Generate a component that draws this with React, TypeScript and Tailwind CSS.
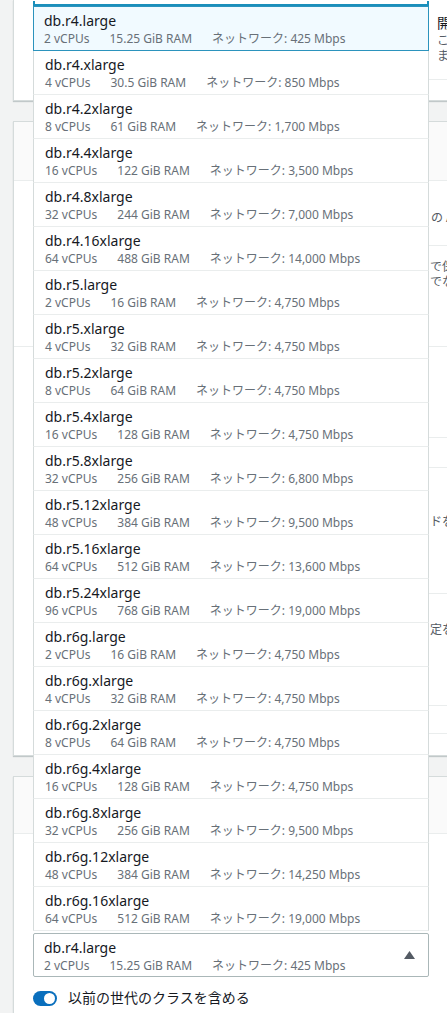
import { Fragment } from "react";

type InstanceClass = {
  name: string;
  cpus: number;
  ram: string;
  network: string;
};

const instanceClasses: InstanceClass[] = [
  { name: "db.r4.large", cpus: 2, ram: "15.25", network: "425" },
  { name: "db.r4.xlarge", cpus: 4, ram: "30.5", network: "850" },
  { name: "db.r4.2xlarge", cpus: 8, ram: "61", network: "1,700" },
  { name: "db.r4.4xlarge", cpus: 16, ram: "122", network: "3,500" },
  { name: "db.r4.8xlarge", cpus: 32, ram: "244", network: "7,000" },
  { name: "db.r4.16xlarge", cpus: 64, ram: "488", network: "14,000" },
  { name: "db.r5.large", cpus: 2, ram: "16", network: "4,750" },
  { name: "db.r5.xlarge", cpus: 4, ram: "32", network: "4,750" },
  { name: "db.r5.2xlarge", cpus: 8, ram: "64", network: "4,750" },
  { name: "db.r5.4xlarge", cpus: 16, ram: "128", network: "4,750" },
  { name: "db.r5.8xlarge", cpus: 32, ram: "256", network: "6,800" },
  { name: "db.r5.12xlarge", cpus: 48, ram: "384", network: "9,500" },
  { name: "db.r5.16xlarge", cpus: 64, ram: "512", network: "13,600" },
  { name: "db.r5.24xlarge", cpus: 96, ram: "768", network: "19,000" },
  { name: "db.r6g.large", cpus: 2, ram: "16", network: "4,750" },
  { name: "db.r6g.xlarge", cpus: 4, ram: "32", network: "4,750" },
  { name: "db.r6g.2xlarge", cpus: 8, ram: "64", network: "4,750" },
  { name: "db.r6g.4xlarge", cpus: 16, ram: "128", network: "4,750" },
  { name: "db.r6g.8xlarge", cpus: 32, ram: "256", network: "9,500" },
  { name: "db.r6g.12xlarge", cpus: 48, ram: "384", network: "14,250" },
  { name: "db.r6g.16xlarge", cpus: 64, ram: "512", network: "19,000" },
];

function ClassLabel({ item }: { item: InstanceClass }) {
  return (
    <>
      <div className="text-[14px] leading-[20px] text-[#16191f]">{item.name}</div>
      <div className="flex gap-[20px] text-[12px] leading-[16px] text-[#687078] whitespace-nowrap">
        <span>{item.cpus} vCPUs</span>
        <span>{item.ram} GiB RAM</span>
        <span>ネットワーク: {item.network} Mbps</span>
      </div>
    </>
  );
}

function ClassList() {
  return (
    <div className="absolute bottom-full left-0 right-0 mb-[2px] z-10 bg-white">
      {/* bottom edge of the focused field above */}
      <div className="h-[5px] border-2 border-t-0 border-[#1a8fbb]" />
      {instanceClasses.map((item, i) =>
        i === 0 ? (
          <div
            key={item.name}
            className="border border-[#2b93bd] bg-[#f1faff] pl-[10px] pt-[4px] pb-[3px]"
          >
            <ClassLabel item={item} />
          </div>
        ) : (
          <div
            key={item.name}
            className="border-x border-b border-x-[#d5dbdb] border-b-[#eaeded] pl-[11px] pt-[4px] pb-[3px]"
          >
            <ClassLabel item={item} />
          </div>
        )
      )}
    </div>
  );
}

function Card({ children, className = "" }: { children: React.ReactNode; className?: string }) {
  return (
    <div
      className={`ml-[13px] w-[460px] bg-white border border-[#d5dbdb] shadow-[0_1px_1px_rgba(0,28,36,0.2)] ${className}`}
    >
      {children}
    </div>
  );
}

// text of the form behind the open list, only the tail shows at the right edge
function Peek({ children, className }: { children: React.ReactNode; className: string }) {
  return <div className={`whitespace-nowrap overflow-hidden ${className}`}>{children}</div>;
}

export default function App() {
  const selected = instanceClasses[0];

  return (
    <div className="relative h-[1013px] w-[447px] overflow-hidden bg-[#f2f3f3] font-['Noto_Sans','Noto_Sans_CJK_JP',sans-serif]">
      {/* Card 1 */}
      <Card className="h-[101px] border-t-0">
        <div className="ml-[20px] h-[80px] border-b border-[#eaeded]">
          <Peek className="pl-[403px] pt-[13px] text-[14px] leading-[20px] text-[#16191f]">
            開発/テスト
          </Peek>
          <Peek className="pl-[403px] text-[12px] leading-[15px] text-[#545b64]">
            このインスタンスは開発用途を目的としてい
          </Peek>
          <Peek className="pl-[403px] text-[12px] leading-[15px] text-[#545b64]">
            ます。
          </Peek>
        </div>
      </Card>

      {/* Card 2 */}
      <Card className="mt-[20px] h-[635px]">
        <div className="h-[59px] bg-[#fafafa] border-b border-[#eaeded]" />
        <div className="ml-[20px] h-[65px] border-b border-[#eaeded]">
          <Peek className="pl-[397px] pt-[29px] text-[12px] leading-[16px] text-[#545b64]">
            の Aurora エンジン
          </Peek>
        </div>
        <div className="h-[101px] border-b border-[#eaeded]">
          <Peek className="pl-[416px] pt-[13px] text-[12px] leading-[15px] text-[#545b64]">
            で保存されます
          </Peek>
          <Peek className="pl-[416px] text-[12px] leading-[15px] text-[#545b64]">
            でなく
          </Peek>
        </div>
        <div className="ml-[20px] h-[91px] border-b border-[#eaeded]" />
        <div className="ml-[20px] h-[30px] border-b border-[#eaeded]" />
        <div className="ml-[20px] h-[126px] border-b border-[#eaeded]">
          <Peek className="pl-[396px] pt-[46px] text-[12px] leading-[16px] text-[#545b64]">
            ドを設定
          </Peek>
        </div>
        <div className="ml-[20px] h-[112px] border-b border-[#eaeded]">
          <Peek className="pl-[396px] pt-[28px] text-[12px] leading-[16px] text-[#545b64]">
            定を使用
          </Peek>
        </div>
        <div className="ml-[20px] h-[28px] border-b border-[#eaeded]" />
      </Card>

      {/* Card 3 */}
      <Card className="mt-[20px]">
        <div className="h-[57px] bg-[#fafafa] border-b border-[#eaeded]" />
        <div className="pl-[19px] pt-[99px] pb-[40px]">
          <div className="relative w-[396px]">
            <ClassList />
            <div className="flex items-center justify-between border border-[#aab7b8] rounded-[2px] bg-white pl-[10px] pr-[13px] pt-[4px] pb-[2px]">
              <div>
                <ClassLabel item={selected} />
              </div>
              <svg width="11" height="8" viewBox="0 0 11 8" className="mb-[2px]">
                <path d="M5.5 0 L11 8 L0 8 Z" fill="#545b64" />
              </svg>
            </div>
          </div>
          <div className="mt-[11px] flex items-center gap-[11px]">
            <div className="flex h-[15px] w-[24px] items-center justify-end rounded-full bg-[#0a6fbd] pr-[2px]">
              <div className="h-[11px] w-[11px] rounded-full bg-white" />
            </div>
            <span className="text-[14px] leading-[20px] text-[#16191f]">
              以前の世代のクラスを含める
            </span>
          </div>
        </div>
      </Card>
    </div>
  );
}
